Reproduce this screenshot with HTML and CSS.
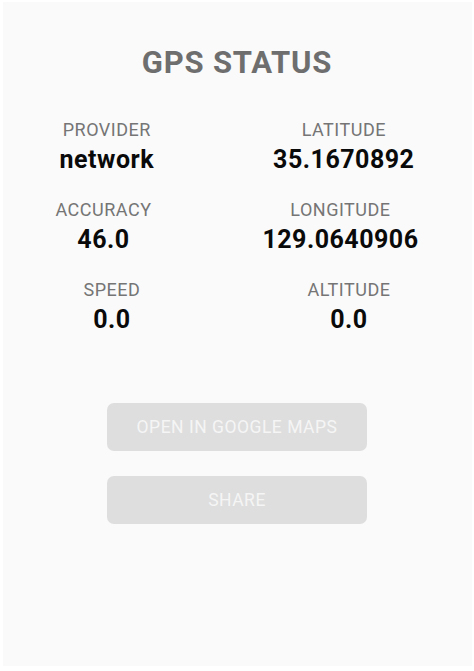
FILE: index.html
```html
<!DOCTYPE html>
<html>
<head>
<meta charset="utf-8">
<link rel="stylesheet" href="styles.css">
</head>
<body>
<div class="screen">
  <h1 class="title">GPS STATUS</h1>
  <div class="rows">
    <div class="row">
      <div class="cell"><div class="label">PROVIDER</div><div class="value">network</div></div>
      <div class="cell"><div class="label">LATITUDE</div><div class="value">35.1670892</div></div>
    </div>
    <div class="row">
      <div class="cell"><div class="label">ACCURACY</div><div class="value">46.0</div></div>
      <div class="cell"><div class="label">LONGITUDE</div><div class="value">129.0640906</div></div>
    </div>
    <div class="row">
      <div class="cell"><div class="label">SPEED</div><div class="value">0.0</div></div>
      <div class="cell"><div class="label">ALTITUDE</div><div class="value">0.0</div></div>
    </div>
  </div>
  <div class="actions">
    <button class="btn">OPEN IN GOOGLE MAPS</button>
    <button class="btn">SHARE</button>
  </div>
</div>
</body>
</html>
```
FILE: styles.css
```css
html, body {
  margin: 0;
  height: 100%;
}
body {
  background: #fafafa;
  font-family: Roboto, "Liberation Sans", sans-serif;
}
.screen {
  height: 100%;
  padding-top: 45px;
  box-sizing: border-box;
  box-shadow: inset 3px 2px 0 #ffffff, inset -2px -5px 0 #ffffff;
}
.title {
  margin: 0;
  text-align: center;
  font-size: 31px;
  line-height: 36px;
  font-weight: 700;
  letter-spacing: 0.8px;
  color: #6e6e6e;
}
.rows {
  margin-top: 38px;
  display: flex;
  flex-direction: column;
  gap: 25px;
}
.row {
  display: flex;
}
.cell {
  flex: 1 1 auto;
  display: flex;
  flex-direction: column;
  align-items: center;
  gap: 5px;
}
.label {
  font-size: 18px;
  line-height: 22px;
  letter-spacing: 0.5px;
  color: #757575;
}
.value {
  font-size: 25px;
  line-height: 28px;
  font-weight: 700;
  letter-spacing: 0.5px;
  color: #0a0a0a;
}
.actions {
  margin-top: 69px;
  display: flex;
  flex-direction: column;
  align-items: center;
  gap: 25px;
}
.btn {
  width: 260px;
  height: 48px;
  border: none;
  border-radius: 7px;
  background: #dedede;
  color: #f5f5f5;
  font-family: Roboto, "Liberation Sans", sans-serif;
  font-size: 17.5px;
  letter-spacing: 0.5px;
  padding: 0;
}
```
